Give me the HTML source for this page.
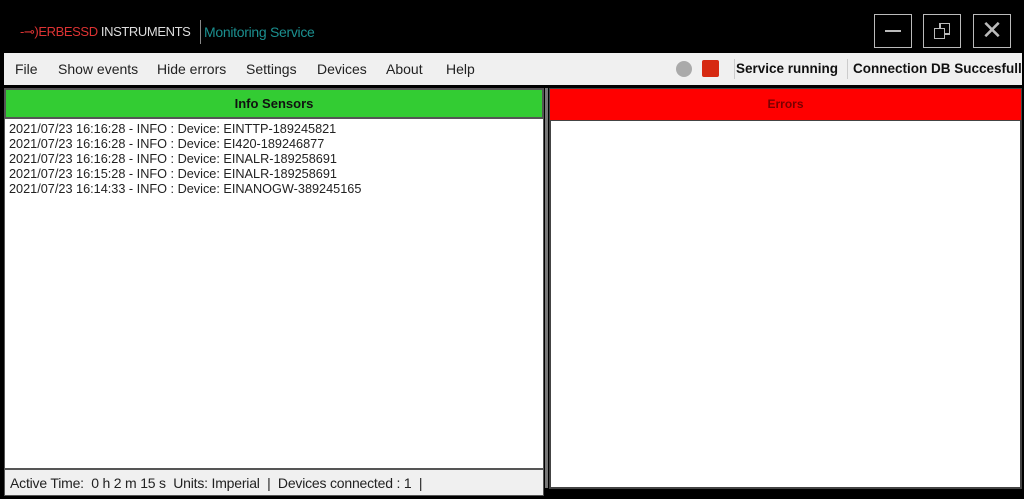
<!DOCTYPE html>
<html><head><style>
*{margin:0;padding:0;box-sizing:border-box}
body{width:1024px;height:499px;background:#000;position:relative;overflow:hidden;font-family:"Liberation Sans",sans-serif}
.a{position:absolute}
.menu span{position:absolute;top:8px;font-size:14px;color:#222}
.btn{position:absolute;top:14px;width:38px;height:34px;border:1.5px solid #bbb}
</style></head><body>
<div class="a" style="left:20px;top:24px;font-size:13px;color:#ddd;letter-spacing:-0.4px;white-space:nowrap"><span style="color:#d33">-⊸)ERBESSD</span> INSTRUMENTS</div>
<div class="a" style="left:200px;top:20px;width:1px;height:24px;background:#888"></div>
<div class="a" style="left:204px;top:24px;font-size:14px;color:#1b8f8f;letter-spacing:-0.3px">Monitoring Service</div>
<div class="btn" style="left:874px"><div class="a" style="left:10px;top:15px;width:16px;height:2px;background:#bbb"></div></div>
<div class="btn" style="left:923px"><div class="a" style="left:10px;top:13px;width:11px;height:11px;border:1.5px solid #bbb"></div><div class="a" style="left:15px;top:8px;width:11px;height:11px;border:1.5px solid #bbb;border-left:none;border-bottom:none"></div><div class="a" style="left:15px;top:8px;width:1.5px;height:5px;background:#bbb"></div><div class="a" style="left:21px;top:18px;width:5px;height:1.5px;background:#bbb"></div></div>
<div class="btn" style="left:973px;color:#bbb;font-size:26px;text-align:center;line-height:30px">✕</div>
<div class="a menu" style="left:4px;top:53px;width:1018px;height:32px;background:#f0f0f0">
<span style="left:11px">File</span><span style="left:54px">Show events</span><span style="left:153px">Hide errors</span><span style="left:242px">Settings</span><span style="left:313px">Devices</span><span style="left:382px">About</span><span style="left:442px">Help</span>
<div class="a" style="left:672px;top:8px;width:16px;height:16px;border-radius:50%;background:#aaa"></div>
<div class="a" style="left:698px;top:7px;width:17px;height:17px;background:#d62a12;border-radius:2px"></div>
<div class="a" style="left:730px;top:6px;width:1px;height:20px;background:#ccc"></div>
<span style="left:732px;font-weight:bold;font-size:13.5px;color:#111">Service running</span>
<div class="a" style="left:843px;top:6px;width:1px;height:20px;background:#ccc"></div>
<span style="left:849px;font-weight:bold;font-size:13.5px;color:#111">Connection DB Succesfull</span>
</div>
<div class="a" style="left:4px;top:88px;width:540px;height:408px;background:#555"></div>
<div class="a" style="left:6px;top:90px;width:536px;height:27px;background:#33cc33;text-align:center;font-weight:bold;font-size:13px;line-height:27px;color:#111">Info Sensors</div>
<div class="a" style="left:5px;top:119px;width:538px;height:349px;background:#fff;padding:3px 4px;font-size:12.7px;line-height:15px;color:#222">
2021/07/23 16:16:28 - INFO : Device: EINTTP-189245821<br>2021/07/23 16:16:28 - INFO : Device: EI420-189246877<br>2021/07/23 16:16:28 - INFO : Device: EINALR-189258691<br>2021/07/23 16:15:28 - INFO : Device: EINALR-189258691<br>2021/07/23 16:14:33 - INFO : Device: EINANOGW-389245165</div>
<div class="a" style="left:5px;top:470px;width:538px;height:25px;background:#f0f0f0;font-size:14px;color:#222;padding:5px 5px;letter-spacing:-0.2px;white-space:nowrap">Active Time:&nbsp; 0 h 2 m 15 s&nbsp; Units: Imperial&nbsp; |&nbsp; Devices connected : 1&nbsp; |</div>
<div class="a" style="left:545px;top:88px;width:3px;height:400px;background:#777"></div>
<div class="a" style="left:549px;top:88px;width:473px;height:401px;background:#444"></div>
<div class="a" style="left:550px;top:89px;width:471px;height:31px;background:#ff0000;text-align:center;font-size:12px;font-weight:bold;line-height:31px;color:#7a0000">Errors</div>
<div class="a" style="left:551px;top:121px;width:469px;height:366px;background:#fff"></div>
</body></html>
